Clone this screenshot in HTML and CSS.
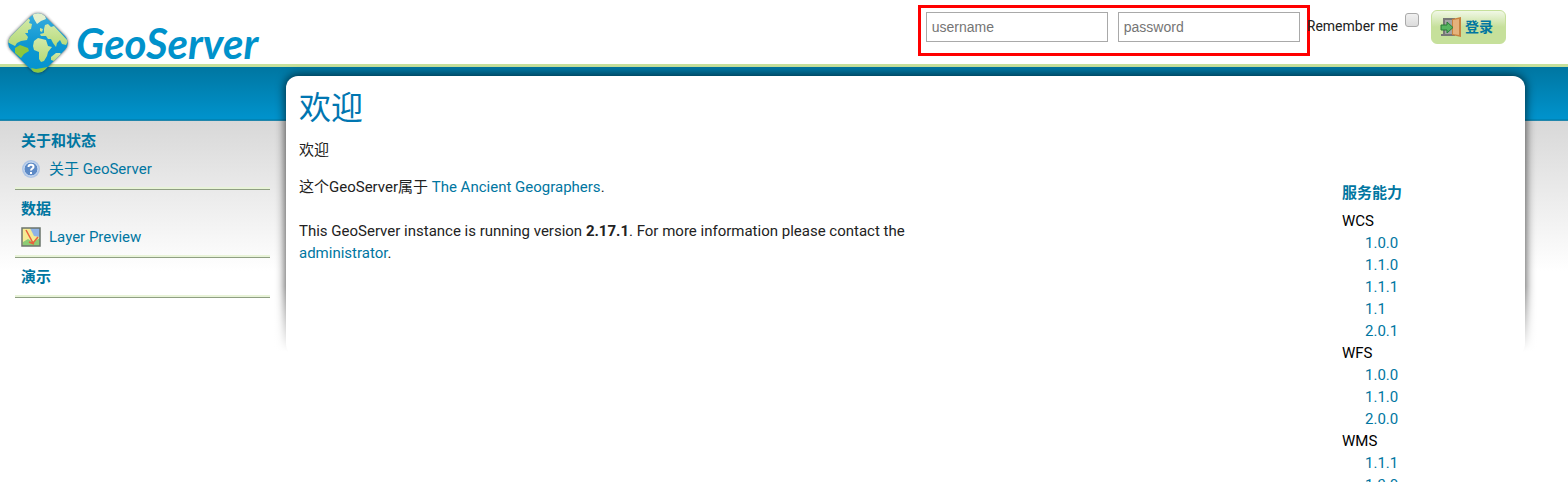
FILE: index.html
```
<!DOCTYPE html>
<html lang="zh">
<head>
  <meta charset="utf-8">
  <title>GeoServer: 欢迎</title>
  <link rel="stylesheet" href="styles.css">
</head>
<body>
  <header class="header">
    <a class="logo" href="#">
      <svg class="logo-mark" viewBox="0 0 76 76" aria-hidden="true">
        <defs>
          <linearGradient id="sea" x1="0" y1="0" x2="0" y2="1">
            <stop offset="0" stop-color="#45b4e2"/>
            <stop offset=".5" stop-color="#0f97d2"/>
            <stop offset="1" stop-color="#0092cf"/>
          </linearGradient>
          <linearGradient id="land" x1="0" y1="0" x2="0" y2="1">
            <stop offset="0" stop-color="#d3e9a8"/>
            <stop offset="1" stop-color="#b5da79"/>
          </linearGradient>
          <clipPath id="globe"><rect x="14" y="14" width="48" height="48" rx="10" transform="rotate(45 38 38)"/></clipPath>
          <filter id="glow" x="-20%" y="-20%" width="140%" height="140%"><feGaussianBlur stdDeviation="1.5"/></filter>
        </defs>
        <rect x="14" y="14" width="48" height="48" rx="10" transform="rotate(45 38 38)" fill="#222" opacity=".8" filter="url(#glow)"/>
        <g clip-path="url(#globe)">
          <rect width="76" height="76" fill="url(#sea)"/>
          <path fill="url(#land)" d="M6 36 L10 28 L27 12 L30 15 L29 18 L32 19 L31 24 L28 25 L28 28 L25 28 L28 32 L27 35 L21 36 L17 38 L15 41 L11 39Z"/>
          <path fill="#8cc63f" d="M15 43 L20 40 L28 43 L29 46 L24 49 L21 53 L15 48Z"/>
          <path fill="#e3f0cd" d="M32 8 L44 8 L46 14 L41 16 L37 19 L34 14Z"/>
          <path fill="url(#land)" d="M40 23 L43 24 L42 27 L40 26Z M44 24 L45 20 L48 19 L51 22 L54 21 L68 36 L66 40 L62 39 L60 35 L57 38 L56 42 L53 38 L51 34 L48 34 L46 31 L41 31 L40 29 L44 28Z"/>
          <path fill="url(#land)" d="M33 41 L34 36 L38 33 L42 34 L46 35 L48 41 L52 42 L48 47 L47 51 L44 56 L41 57 L39 54 L39 47 L34 45Z"/>
          <path fill="url(#land)" d="M51 52 L56 48 L60 48 L63 51 L57 57 L51 55Z"/>
          <path fill="#8cc63f" d="M31 63 L36 64 L48 62 L40 70 L34 69Z"/>
        </g>
      </svg>
      <span>GeoServer</span>
    </a>
    <form class="login">
      <div class="fields">
        <input class="text-input" type="text" placeholder="username" aria-label="username">
        <input class="text-input" type="password" placeholder="password" aria-label="password">
      </div>
      <label for="remember">Remember me</label>
      <input class="remember" id="remember" type="checkbox">
      <button class="login-button" type="submit">
        <svg width="22" height="22" viewBox="0 0 22 22" aria-hidden="true">
          <path fill="#777" d="M3 2h12v18H1v-2h2z"/>
          <path fill="#a4a4a4" d="M5 4h8v14H5z"/>
          <path fill="#c8823f" d="M12 3l9-2v20l-9-2z"/>
          <path fill="#e5b27c" d="M13 4l6-1v16l-6-1z"/>
          <path fill="#57b560" stroke="#267d35" d="M1 9h6V6l6 5.500-6 5.500v-3H1z"/>
        </svg>
        登录
      </button>
    </form>
  </header>

  <div class="main">
    <nav class="sidebar">
      <section class="menu">
        <h3>关于和状态</h3>
        <a href="#">
          <svg width="20" height="20" viewBox="0 0 20 20" aria-hidden="true">
            <circle cx="10" cy="10" r="9" fill="#adc5e6"/>
            <circle cx="10" cy="10" r="7" fill="#5d8ac6" stroke="#d3e1f3"/>
            <path fill="none" stroke="#fff" stroke-width="2" d="M7.500 8c0-3 5-3 5 0 0 1.500-2.500 1.500-2.500 3.500M10 13v2"/>
          </svg>
          关于 GeoServer
        </a>
      </section>
      <section class="menu">
        <h3>数据</h3>
        <a href="#">
          <svg width="20" height="20" viewBox="0 0 20 20" aria-hidden="true">
            <path fill="#f5eb94" d="M1 1h18v18H1z"/>
            <path fill="#8fb3e6" d="M9 1h10v9l-6-1z"/>
            <path fill="#8ccb74" d="M2 19v-4l5-3 5 3 7-4v8z"/>
            <path fill="none" stroke="#e8603c" stroke-width="1.500" d="M5 3l7 13 5-6M8 15l5 2"/>
            <path fill="none" stroke="#6b746b" stroke-width="1.500" d="M1 1h18v18H1z"/>
          </svg>
          Layer Preview
        </a>
      </section>
      <section class="menu">
        <h3>演示</h3>
      </section>
    </nav>

    <main class="page">
      <div class="content">
        <h1>欢迎</h1>
        <p>欢迎</p>
        <p>这个GeoServer属于 <a href="#">The Ancient Geographers</a>.</p>
        <p class="version">This GeoServer instance is running version <strong>2.17.1</strong>. For more information please contact the <a href="#">administrator</a>.</p>
      </div>
      <aside class="services">
        <h3>服务能力</h3>
        <dl>
          <dt>WCS</dt>
          <dd><a href="#">1.0.0</a></dd>
          <dd><a href="#">1.1.0</a></dd>
          <dd><a href="#">1.1.1</a></dd>
          <dd><a href="#">1.1</a></dd>
          <dd><a href="#">2.0.1</a></dd>
          <dt>WFS</dt>
          <dd><a href="#">1.0.0</a></dd>
          <dd><a href="#">1.1.0</a></dd>
          <dd><a href="#">2.0.0</a></dd>
          <dt>WMS</dt>
          <dd><a href="#">1.1.1</a></dd>
          <dd><a href="#">1.3.0</a></dd>
        </dl>
      </aside>
    </main>
  </div>
</body>
</html>
```
FILE: styles.css
```
* {
  box-sizing: border-box;
}
html {
  height: 100%;
}
body {
  margin: 0;
  height: 100%;
  overflow: hidden;
  background: #fff;
  color: #222;
  font: 15px/22px Tahoma, Roboto, "Noto Sans CJK SC", sans-serif;
}
a {
  color: #0076a1;
  text-decoration: none;
}
h1, h3, p, dl, dd {
  margin: 0;
}
h3 {
  color: #0076a1;
  font-size: 15px;
}

/* header */
.header {
  display: flex;
  justify-content: space-between;
  align-items: flex-start;
  height: 67px;
  padding: 5px 62px 0 0;
  border-bottom: 3px solid #c6e09b;
}
.logo {
  display: flex;
  position: relative;
  z-index: 1;
  color: #0092cb;
  font: italic bold 42px/76px Lato, sans-serif;
}
.logo-mark {
  width: 76px;
  height: 76px;
}
.login {
  display: flex;
  align-items: flex-start;
}
.login label {
  margin: 10px 7px 0 -3px;
  font-size: 14px;
}
.fields {
  display: flex;
  gap: 10px;
  padding: 4px 7px 11px 5px;
  border: 3px solid #f00;
}
.text-input {
  width: 182px;
  height: 30px;
  padding: 0 5px;
  border: 1px solid #a9a9a9;
  font: 14px "Liberation Sans", Arial, sans-serif;
}
.text-input::placeholder {
  color: #757575;
}
.remember {
  width: 14px;
  height: 14px;
  margin: 8px 12px 0 0;
  appearance: none;
  border: 1px solid #aaa;
  border-radius: 3px;
  background: linear-gradient(#f0f0f0, #dcdcdc);
}
.login-button {
  display: flex;
  align-items: center;
  gap: 3px;
  height: 34px;
  margin-top: 5px;
  padding: 0 12px 2px 8px;
  border: 1px solid #c6e09b;
  border-radius: 6px;
  background: linear-gradient(#f1f8e6, #c6e09b 50%);
  color: #0076a1;
  font: bold 14px "Noto Sans CJK SC", sans-serif;
}
.login-button svg {
  margin-top: 2px;
}

/* blue band fading into the grey backdrop */
.main {
  display: flex;
  align-items: flex-start;
  padding: 9px 43px 0 15px;
  background:
    linear-gradient(#0076a1, #0092cb 50px, #0092cb 52px, #0076a1 53px, #4197b7 54px) top / 100% 54px no-repeat,
    linear-gradient(#d8d8d8, #fff) 0 54px / 100% 150px no-repeat;
}
.sidebar {
  width: 255px;
  margin-right: 16px;
  padding-top: 46px;
}
.menu {
  padding: 8px 6px 9px;
  border-bottom: 1px solid #8f9f83;
  box-shadow: inset 0 -2px #e8f3d8;
}
.menu a {
  display: flex;
  align-items: center;
  gap: 8px;
  margin-top: 6px;
}

/* page panel */
.page {
  display: flex;
  position: relative;
  z-index: 0;
  flex: 1;
  justify-content: space-between;
  padding: 12px 114px 0 13px;
}
.page::before {
  content: "";
  position: absolute;
  z-index: -1;
  inset: 0 0 auto;
  height: 280px;
  border-radius: 12px;
  background: #fff;
  box-shadow: 0 0 10px 1px #000a;
}
/* fades the side shadows out */
.page::after {
  content: "";
  position: absolute;
  z-index: -1;
  top: 210px;
  right: -15px;
  left: -15px;
  height: 90px;
  background: linear-gradient(#fff0, #fff 66px);
}
.content {
  width: 640px;
}
h1 {
  margin-bottom: 11px;
  color: #0076b1;
  font-size: 32px;
  font-weight: normal;
  line-height: 40px;
}
.content p {
  margin-bottom: 15px;
}
.content .version {
  margin-top: 22px;
}
.services {
  width: 69px;
  padding-top: 94px;
  color: #000;
}
.services h3 {
  margin-bottom: 6px;
}
.services dd {
  margin-left: 23px;
}
```
